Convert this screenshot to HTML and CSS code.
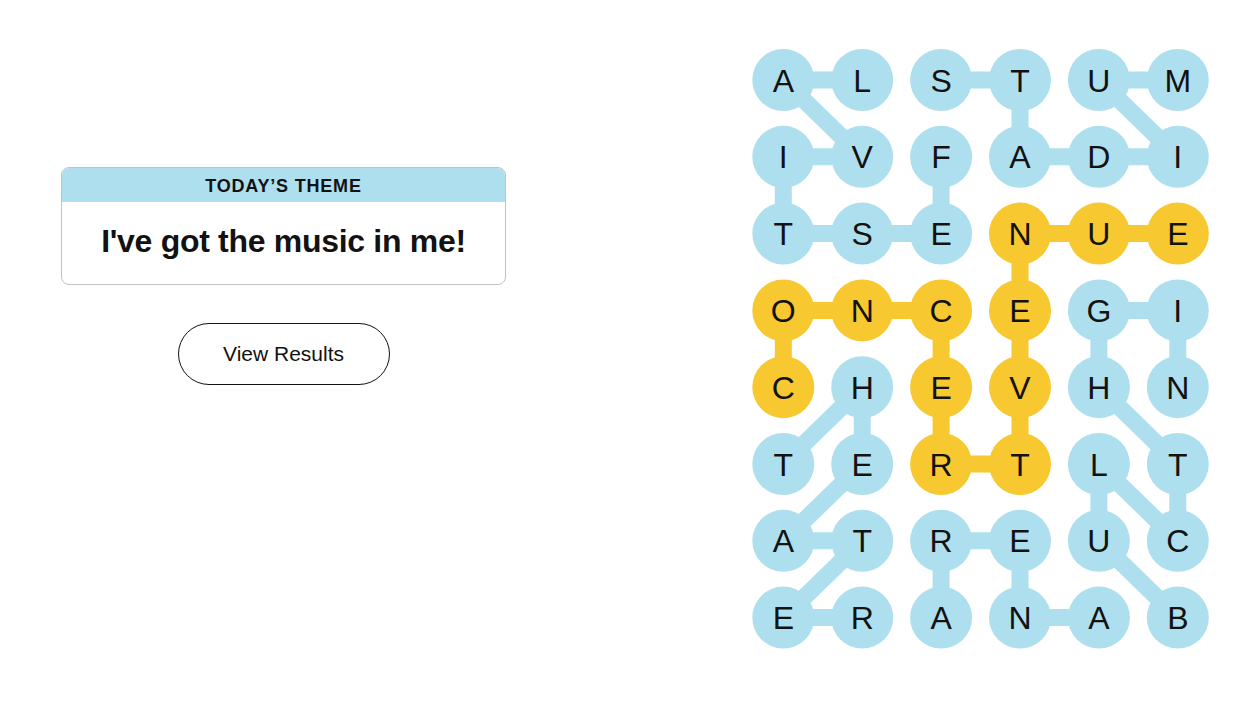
FILE: index.html
```html
<!DOCTYPE html>
<html lang="en">
<head>
<meta charset="utf-8">
<title>Strands</title>
<link rel="stylesheet" href="styles.css">
</head>
<body>
<main class="page">
  <section class="info">
    <div class="theme-card">
      <div class="theme-head">TODAY’S THEME</div>
      <div class="theme-body">I've got the music in me!</div>
    </div>
    <button class="results-btn" type="button">View Results</button>
  </section>
  <section class="board">
    <svg class="board-svg" width="464" height="604" viewBox="0 0 464 604" xmlns="http://www.w3.org/2000/svg">
      <g class="links-blue" stroke="#aedfee" stroke-width="17" stroke-linecap="butt" fill="none">
        <!-- FESTIVAL -->
        <line x1="33.3" y1="33" x2="112.2" y2="33"/>
        <line x1="33.3" y1="33" x2="112.2" y2="109.8"/>
        <line x1="112.2" y1="109.8" x2="33.3" y2="109.8"/>
        <line x1="33.3" y1="109.8" x2="33.3" y2="186.6"/>
        <line x1="33.3" y1="186.6" x2="191.1" y2="186.6"/>
        <line x1="191.1" y1="186.6" x2="191.1" y2="109.8"/>
        <!-- STADIUM -->
        <line x1="191.1" y1="33" x2="270" y2="33"/>
        <line x1="270" y1="33" x2="270" y2="109.8"/>
        <line x1="270" y1="109.8" x2="427.8" y2="109.8"/>
        <line x1="427.8" y1="109.8" x2="348.9" y2="33"/>
        <line x1="348.9" y1="33" x2="427.8" y2="33"/>
        <!-- NIGHTCLUB -->
        <line x1="427.8" y1="340.2" x2="427.8" y2="263.4"/>
        <line x1="427.8" y1="263.4" x2="348.9" y2="263.4"/>
        <line x1="348.9" y1="263.4" x2="348.9" y2="340.2"/>
        <line x1="348.9" y1="340.2" x2="427.8" y2="417"/>
        <line x1="427.8" y1="417" x2="427.8" y2="493.8"/>
        <line x1="427.8" y1="493.8" x2="348.9" y2="417"/>
        <line x1="348.9" y1="417" x2="348.9" y2="493.8"/>
        <line x1="348.9" y1="493.8" x2="427.8" y2="570.6"/>
        <!-- ARENA -->
        <line x1="191.1" y1="570.6" x2="191.1" y2="493.8"/>
        <line x1="191.1" y1="493.8" x2="270" y2="493.8"/>
        <line x1="270" y1="493.8" x2="270" y2="570.6"/>
        <line x1="270" y1="570.6" x2="348.9" y2="570.6"/>
        <!-- THEATER -->
        <line x1="33.3" y1="417" x2="112.2" y2="340.2"/>
        <line x1="112.2" y1="340.2" x2="112.2" y2="417"/>
        <line x1="112.2" y1="417" x2="33.3" y2="493.8"/>
        <line x1="33.3" y1="493.8" x2="112.2" y2="493.8"/>
        <line x1="112.2" y1="493.8" x2="33.3" y2="570.6"/>
        <line x1="33.3" y1="570.6" x2="112.2" y2="570.6"/>
      </g>
      <g class="links-gold" stroke="#f7c82f" stroke-width="17" fill="none">
        <line x1="270" y1="186.6" x2="427.8" y2="186.6"/>
        <line x1="270" y1="186.6" x2="270" y2="417"/>
        <line x1="270" y1="417" x2="191.1" y2="417"/>
        <line x1="191.1" y1="417" x2="191.1" y2="263.4"/>
        <line x1="191.1" y1="263.4" x2="33.3" y2="263.4"/>
        <line x1="33.3" y1="263.4" x2="33.3" y2="340.2"/>
      </g>
      <g class="nodes">
        <g fill="#aedfee">
          <circle cx="33.3" cy="33" r="31"/><circle cx="112.2" cy="33" r="31"/><circle cx="191.1" cy="33" r="31"/><circle cx="270" cy="33" r="31"/><circle cx="348.9" cy="33" r="31"/><circle cx="427.8" cy="33" r="31"/>
          <circle cx="33.3" cy="109.8" r="31"/><circle cx="112.2" cy="109.8" r="31"/><circle cx="191.1" cy="109.8" r="31"/><circle cx="270" cy="109.8" r="31"/><circle cx="348.9" cy="109.8" r="31"/><circle cx="427.8" cy="109.8" r="31"/>
          <circle cx="33.3" cy="186.6" r="31"/><circle cx="112.2" cy="186.6" r="31"/><circle cx="191.1" cy="186.6" r="31"/>
          <circle cx="348.9" cy="263.4" r="31"/><circle cx="427.8" cy="263.4" r="31"/>
          <circle cx="112.2" cy="340.2" r="31"/><circle cx="348.9" cy="340.2" r="31"/><circle cx="427.8" cy="340.2" r="31"/>
          <circle cx="33.3" cy="417" r="31"/><circle cx="112.2" cy="417" r="31"/><circle cx="348.9" cy="417" r="31"/><circle cx="427.8" cy="417" r="31"/>
          <circle cx="33.3" cy="493.8" r="31"/><circle cx="112.2" cy="493.8" r="31"/><circle cx="191.1" cy="493.8" r="31"/><circle cx="270" cy="493.8" r="31"/><circle cx="348.9" cy="493.8" r="31"/><circle cx="427.8" cy="493.8" r="31"/>
          <circle cx="33.3" cy="570.6" r="31"/><circle cx="112.2" cy="570.6" r="31"/><circle cx="191.1" cy="570.6" r="31"/><circle cx="270" cy="570.6" r="31"/><circle cx="348.9" cy="570.6" r="31"/><circle cx="427.8" cy="570.6" r="31"/>
        </g>
        <g fill="#f7c82f">
          <circle cx="270" cy="186.6" r="31"/><circle cx="348.9" cy="186.6" r="31"/><circle cx="427.8" cy="186.6" r="31"/>
          <circle cx="33.3" cy="263.4" r="31"/><circle cx="112.2" cy="263.4" r="31"/><circle cx="191.1" cy="263.4" r="31"/><circle cx="270" cy="263.4" r="31"/>
          <circle cx="33.3" cy="340.2" r="31"/><circle cx="191.1" cy="340.2" r="31"/><circle cx="270" cy="340.2" r="31"/>
          <circle cx="191.1" cy="417" r="31"/><circle cx="270" cy="417" r="31"/>
        </g>
      </g>
      <g class="letters" text-anchor="middle">
        <text x="33.3" y="44.5">A</text><text x="112.2" y="44.5">L</text><text x="191.1" y="44.5">S</text><text x="270" y="44.5">T</text><text x="348.9" y="44.5">U</text><text x="427.8" y="44.5">M</text>
        <text x="33.3" y="121.3">I</text><text x="112.2" y="121.3">V</text><text x="191.1" y="121.3">F</text><text x="270" y="121.3">A</text><text x="348.9" y="121.3">D</text><text x="427.8" y="121.3">I</text>
        <text x="33.3" y="198.1">T</text><text x="112.2" y="198.1">S</text><text x="191.1" y="198.1">E</text><text x="270" y="198.1">N</text><text x="348.9" y="198.1">U</text><text x="427.8" y="198.1">E</text>
        <text x="33.3" y="274.9">O</text><text x="112.2" y="274.9">N</text><text x="191.1" y="274.9">C</text><text x="270" y="274.9">E</text><text x="348.9" y="274.9">G</text><text x="427.8" y="274.9">I</text>
        <text x="33.3" y="351.7">C</text><text x="112.2" y="351.7">H</text><text x="191.1" y="351.7">E</text><text x="270" y="351.7">V</text><text x="348.9" y="351.7">H</text><text x="427.8" y="351.7">N</text>
        <text x="33.3" y="428.5">T</text><text x="112.2" y="428.5">E</text><text x="191.1" y="428.5">R</text><text x="270" y="428.5">T</text><text x="348.9" y="428.5">L</text><text x="427.8" y="428.5">T</text>
        <text x="33.3" y="505.3">A</text><text x="112.2" y="505.3">T</text><text x="191.1" y="505.3">R</text><text x="270" y="505.3">E</text><text x="348.9" y="505.3">U</text><text x="427.8" y="505.3">C</text>
        <text x="33.3" y="582.1">E</text><text x="112.2" y="582.1">R</text><text x="191.1" y="582.1">A</text><text x="270" y="582.1">N</text><text x="348.9" y="582.1">A</text><text x="427.8" y="582.1">B</text>
      </g>
    </svg>
  </section>
</main>
</body>
</html>
```

FILE: styles.css
```css
* {
  box-sizing: border-box;
}

html,
body {
  margin: 0;
  padding: 0;
  background: #ffffff;
}

body {
  font-family: "Liberation Sans", Arial, sans-serif;
  color: #121212;
}

.page {
  display: flex;
  align-items: flex-start;
  width: 1250px;
  height: 703px;
}

.info {
  display: flex;
  flex-direction: column;
  align-items: center;
  width: 445px;
  margin-left: 61px;
  padding-top: 167px;
}

.theme-card {
  width: 445px;
  border: 1px solid #c2c2c2;
  border-radius: 8px;
  overflow: hidden;
  background: #ffffff;
}

.theme-head {
  height: 34px;
  background: #aedfee;
  display: flex;
  align-items: center;
  justify-content: center;
  font-size: 18px;
  font-weight: 700;
  letter-spacing: 0.8px;
  color: #121212;
  padding-top: 2px;
}

.theme-body {
  height: 82px;
  display: flex;
  align-items: center;
  justify-content: center;
  font-size: 32px;
  font-weight: 700;
  letter-spacing: -0.3px;
  color: #121212;
  padding-bottom: 4px;
}

.results-btn {
  margin-top: 38px;
  width: 212px;
  height: 62px;
  border: 1.5px solid #121212;
  border-radius: 31px;
  background: #ffffff;
  font-family: "Liberation Sans", Arial, sans-serif;
  font-size: 21px;
  color: #121212;
  padding: 0;
}

.board {
  margin-left: 244px;
  margin-top: 47px;
}

.board-svg {
  display: block;
}

.letters text {
  font-family: "Liberation Sans", Arial, sans-serif;
  font-size: 32px;
  fill: #121212;
}
```
